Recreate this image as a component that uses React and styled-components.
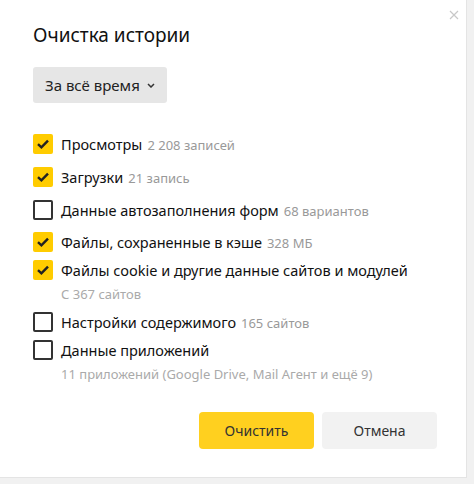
import React from 'react';
import styled, { createGlobalStyle } from 'styled-components';

const GlobalStyle = createGlobalStyle`
  html, body {
    margin: 0;
    padding: 0;
    background: #f1f1f1;
    font-family: "Noto Sans", "Open Sans", Arial, sans-serif;
    color: #000;
  }
`;

const Dialog = styled.div`
  position: relative;
  box-sizing: border-box;
  width: 467px;
  height: 478px;
  background: #fff;
  border-right: 1px solid #e4e4e4;
  border-bottom: 1px solid #e4e4e4;
  padding: 22px 29px 0 33px;
  display: flex;
  flex-direction: column;
`;

const CloseButton = styled.button`
  position: absolute;
  top: 8px;
  right: 5px;
  width: 14px;
  height: 14px;
  padding: 0;
  border: none;
  background: none;
  display: flex;
  align-items: center;
  justify-content: center;
`;

const Title = styled.h1`
  margin: 0;
  font-size: 19px;
  font-weight: 400;
  line-height: 26px;
  color: #111;
`;

const PeriodSelect = styled.button`
  margin-top: 19px;
  align-self: flex-start;
  height: 36px;
  width: 134px;
  box-sizing: border-box;
  padding: 0 12px;
  border: none;
  border-radius: 3px;
  background: #e6e6e6;
  font-family: inherit;
  font-size: 15px;
  white-space: nowrap;
  color: #222;
  display: flex;
  align-items: center;
  justify-content: space-between;
`;

const List = styled.div`
  margin-top: 27px;
  display: flex;
  flex-direction: column;
`;

const Row = styled.div`
  margin-top: ${p => p.$gap}px;
`;

const Line = styled.label`
  display: flex;
  align-items: center;
  height: 28px;
  gap: 8px;
`;

const Box = styled.span`
  box-sizing: border-box;
  width: 20px;
  height: 20px;
  flex-shrink: 0;
  border-radius: 2px;
  display: flex;
  align-items: center;
  justify-content: center;
  background: ${p => (p.$checked ? '#ffcc00' : '#fff')};
  border: ${p => (p.$checked ? 'none' : '2px solid #333')};
`;

const Label = styled.span`
  font-size: 14.5px;
  color: #111;
  white-space: nowrap;
`;

const Count = styled.span`
  font-size: 13px;
  color: #999;
  margin-left: 5px;
`;

const Note = styled.div`
  margin-left: 28px;
  font-size: 13px;
  line-height: 20px;
  color: #aaa;
`;

const Actions = styled.div`
  margin-top: 28px;
  display: flex;
  justify-content: flex-end;
  gap: 8px;
`;

const Button = styled.button`
  width: 115px;
  height: 37px;
  border: none;
  border-radius: 4px;
  font-family: inherit;
  font-size: 14px;
  color: #333;
  background: ${p => (p.$primary ? '#ffd01f' : '#f2f2f2')};
`;

const Check = () => (
  <svg width="14" height="12" viewBox="0 0 14 12">
    <path d="M2 6.2 L5.4 9.4 L12 2.6" fill="none" stroke="#222" strokeWidth="2.4" />
  </svg>
);

const items = [
  { label: 'Просмотры', count: '2 208 записей', checked: true, gap: 0 },
  { label: 'Загрузки', count: '21 запись', checked: true, gap: 5 },
  { label: 'Данные автозаполнения форм', count: '68 вариантов', checked: false, gap: 5 },
  { label: 'Файлы, сохраненные в кэше', count: '328 МБ', checked: true, gap: 4 },
  { label: 'Файлы cookie и другие данные сайтов и модулей', note: 'С 367 сайтов', checked: true, gap: 0 },
  { label: 'Настройки содержимого', count: '165 сайтов', checked: false, gap: 4 },
  { label: 'Данные приложений', note: '11 приложений (Google Drive, Mail Агент и ещё 9)', checked: false, gap: 0 },
];

export default function App() {
  return (
    <>
      <GlobalStyle />
      <Dialog>
        <CloseButton aria-label="Закрыть">
          <svg width="10" height="10" viewBox="0 0 10 10">
            <path d="M1 1 L9 9 M9 1 L1 9" stroke="#c8c8c8" strokeWidth="1.2" />
          </svg>
        </CloseButton>
        <Title>Очистка истории</Title>
        <PeriodSelect>
          За всё время
          <svg width="8" height="5" viewBox="0 0 8 5">
            <path d="M1 1 L4 4 L7 1" fill="none" stroke="#333" strokeWidth="1.5" />
          </svg>
        </PeriodSelect>
        <List>
          {items.map(item => (
            <Row key={item.label} $gap={item.gap}>
              <Line>
                <Box $checked={item.checked}>{item.checked && <Check />}</Box>
                <Label>
                  {item.label}
                  {item.count && <Count>{item.count}</Count>}
                </Label>
              </Line>
              {item.note && <Note>{item.note}</Note>}
            </Row>
          ))}
        </List>
        <Actions>
          <Button $primary>Очистить</Button>
          <Button>Отмена</Button>
        </Actions>
      </Dialog>
    </>
  );
}
